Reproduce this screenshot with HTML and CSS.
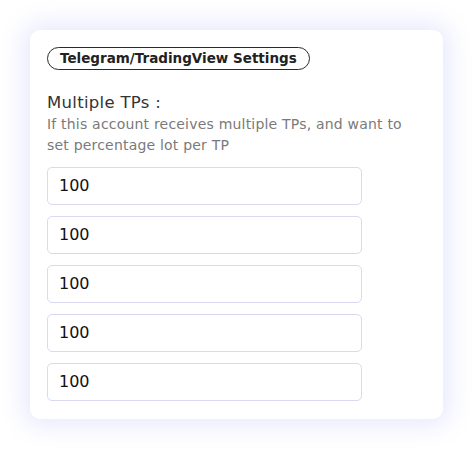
FILE: index.html
```html
<!DOCTYPE html>
<html>
<head>
<meta charset="utf-8">
<link rel="stylesheet" href="styles.css">
</head>
<body>
<div class="page">
  <div class="card">
    <div class="badge">Telegram/TradingView Settings</div>
    <div class="title">Multiple TPs :</div>
    <div class="desc">If this account receives multiple TPs, and want to<br>set percentage lot per TP</div>
    <div class="inputs">
      <div class="field">100</div>
      <div class="field">100</div>
      <div class="field">100</div>
      <div class="field">100</div>
      <div class="field">100</div>
    </div>
  </div>
</div>
</body>
</html>
```
FILE: styles.css
```css
html, body {
  margin: 0;
  padding: 0;
  background: #ffffff;
}
.page {
  padding: 30px 31px 31px 30px;
  font-family: "DejaVu Sans", sans-serif;
}
.card {
  width: 413px;
  height: 389px;
  box-sizing: border-box;
  background: #ffffff;
  border-radius: 10px;
  box-shadow: 0 0 24px 6px rgba(200, 205, 250, 0.45);
  padding: 17px 17px 0 17px;
}
.badge {
  display: inline-block;
  box-sizing: border-box;
  height: 23px;
  line-height: 20px;
  padding: 0 12px;
  border: 1.5px solid #2a2a2a;
  border-radius: 12px;
  font-size: 13.5px;
  font-weight: bold;
  color: #222;
}
.title {
  margin-top: 22px;
  font-size: 16.5px;
  letter-spacing: 0.3px;
  color: #333;
  line-height: 22px;
}
.desc {
  font-size: 14px;
  letter-spacing: 0.2px;
  color: #7a7a7a;
  line-height: 21px;
}
.inputs {
  margin-top: 11px;
  display: flex;
  flex-direction: column;
  gap: 11px;
}
.field {
  box-sizing: border-box;
  width: 315px;
  height: 38px;
  border: 1.5px solid #dcd8f2;
  border-radius: 5px;
  padding-left: 11px;
  line-height: 35px;
  font-size: 16px;
  color: #111;
}
```
